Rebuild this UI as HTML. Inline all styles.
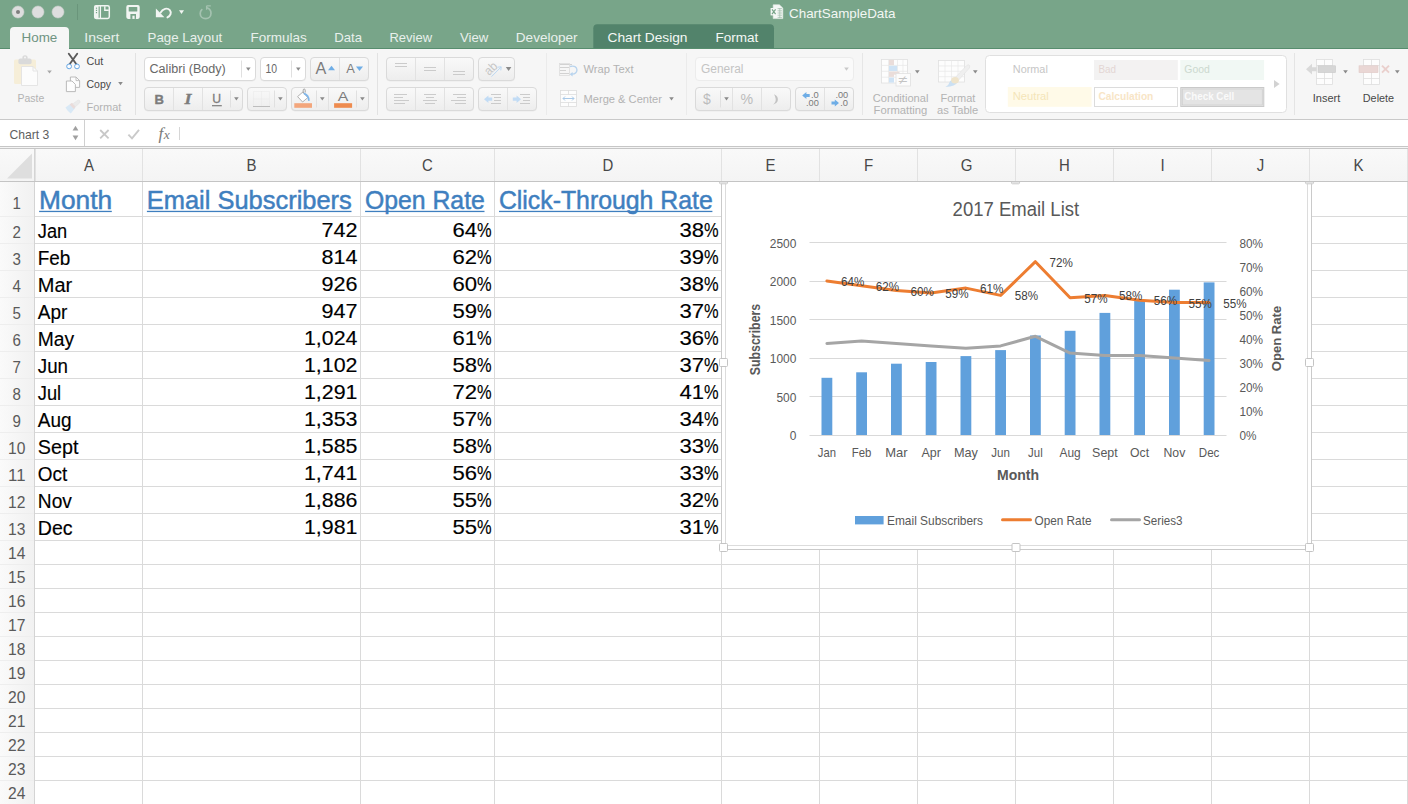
<!DOCTYPE html>
<html lang="en">
<head>
<meta charset="utf-8">
<title>ChartSampleData</title>
<style>
html,body{margin:0;padding:0;background:#ffffff;}
body{width:1408px;height:804px;overflow:hidden;position:relative;font-family:"Liberation Sans",sans-serif;}
svg{position:absolute;left:0;top:0;display:block;font-family:"Liberation Sans",sans-serif;}
</style>
</head>
<body>
<svg width="1408" height="804" viewBox="0 0 1408 804">
<rect x="0" y="0" width="1408" height="804" fill="#ffffff"/>
<g id="titlebar">
<rect x="0" y="0" width="1408" height="49" fill="#78a589"/>
<circle cx="18" cy="12" r="6" fill="#dedede" stroke="#c9cfcb" stroke-width="0.6"/>
<circle cx="38" cy="12" r="6" fill="#dedede" stroke="#c9cfcb" stroke-width="0.6"/>
<circle cx="58" cy="12" r="6" fill="#dedede" stroke="#c9cfcb" stroke-width="0.6"/>
<circle cx="18" cy="12" r="2" fill="#7e7e7e"/>
<line x1="77.5" y1="4" x2="77.5" y2="20" stroke="#6a957b" stroke-width="1" />
<rect x="94.7" y="5.8" width="14.6" height="12.6" fill="none" stroke="#f1f5f2" stroke-width="1.5" rx="1.6"/>
<rect x="94.4" y="5.6" width="4.2" height="13" fill="#f1f5f2" rx="1"/>
<rect x="95.9" y="7.6" width="1.2" height="1.2" fill="#78a589"/>
<rect x="95.9" y="9.8" width="1.2" height="1.2" fill="#78a589"/>
<rect x="95.9" y="12" width="1.2" height="1.2" fill="#78a589"/>
<line x1="100.4" y1="6" x2="100.4" y2="18.2" stroke="#f1f5f2" stroke-width="1.3" />
<path d="M104.8 6.2v4h4" fill="none" stroke="#f1f5f2" stroke-width="1.4"/>
<rect x="126.3" y="5.1" width="13.4" height="13.8" fill="#f1f5f2" rx="1.8"/>
<rect x="128.7" y="6.9" width="8.6" height="4.6" fill="#78a589" rx="0.6"/>
<rect x="130.4" y="14" width="5.6" height="4.9" fill="#78a589"/>
<rect x="132.4" y="15.7" width="2.2" height="3.2" fill="#f1f5f2"/>
<path d="M155.9 8.6V17.2H164.4Z" fill="#f1f5f2"/>
<path d="M160.6 12.6 C162.6 8.6 167.4 7.4 169.8 10.2 C171.8 12.6 170.6 15.8 167.4 17.4" fill="none" stroke="#f1f5f2" stroke-width="1.9" stroke-linecap="round"/>
<path d="M179.0 10.299999999999999h5l-2.5 3.8z" fill="#f1f5f2"/>
<path d="M207.6 8 C209.8 9 211 11 211 13.2 C211 16.4 208.6 18.6 205.6 18.6 C202.6 18.6 200.2 16.4 200.2 13.4 C200.2 11.8 200.8 10.6 201.8 9.6" fill="none" stroke="#a4c2b0" stroke-width="1.7" stroke-linecap="round"/>
<path d="M206.6 5.8h4.2M206.6 5.8v4" fill="none" stroke="#a4c2b0" stroke-width="1.3"/>
<path d="M773.2 4.8h6.2l3.4 3.2v10.6h-9.6z" fill="#f4f7f5" stroke="#e8efe9" stroke-width="0.6"/>
<rect x="770.6" y="8" width="6.4" height="7.4" fill="#f4f7f5"/>
<path d="M772 9.4l3.6 4.8M775.6 9.4l-3.6 4.8" fill="none" stroke="#78a589" stroke-width="1.2"/>
<path d="M777.6 8.6h4.4M777.6 10.8h4.4M777.6 13h4.4M777.6 15.2h4.4M777.6 17.4h4.4M779.8 8v10" fill="none" stroke="#9dbdaa" stroke-width="0.7"/>
<text x="789" y="18" font-size="13" fill="#f3f7f4" textLength="106.5" lengthAdjust="spacingAndGlyphs">ChartSampleData</text>
</g>
<g id="tabs">
<path d="M10 49V31q0-4 4-4h51q4 0 4 4v18z" fill="#f6f6f6"/>
<text x="21.5" y="42" font-size="13" fill="#6f9482" textLength="35.8" lengthAdjust="spacingAndGlyphs">Home</text>
<text x="84.3" y="42" font-size="13" fill="#e9f0ec" textLength="35" lengthAdjust="spacingAndGlyphs">Insert</text>
<text x="147.5" y="42" font-size="13" fill="#e9f0ec" textLength="74.8" lengthAdjust="spacingAndGlyphs">Page Layout</text>
<text x="250.5" y="42" font-size="13" fill="#e9f0ec" textLength="56.3" lengthAdjust="spacingAndGlyphs">Formulas</text>
<text x="334.3" y="42" font-size="13" fill="#e9f0ec" textLength="27.8" lengthAdjust="spacingAndGlyphs">Data</text>
<text x="389.5" y="42" font-size="13" fill="#e9f0ec" textLength="42.5" lengthAdjust="spacingAndGlyphs">Review</text>
<text x="460" y="42" font-size="13" fill="#e9f0ec" textLength="28.3" lengthAdjust="spacingAndGlyphs">View</text>
<text x="515.8" y="42" font-size="13" fill="#e9f0ec" textLength="61.8" lengthAdjust="spacingAndGlyphs">Developer</text>
<path d="M593.3 48.5V28.3q0-4 4-4h172.7q4 0 4 4v20.2z" fill="#52836b"/>
<text x="607.5" y="42" font-size="13" fill="#f4f8f5" textLength="80" lengthAdjust="spacingAndGlyphs">Chart Design</text>
<text x="715.5" y="42" font-size="13" fill="#f4f8f5" textLength="42.8" lengthAdjust="spacingAndGlyphs">Format</text>
<rect x="0" y="48" width="1408" height="1" fill="#578d6e"/>
<rect x="10" y="48" width="59" height="1" fill="#f6f6f6"/>
</g>
<defs><linearGradient id="bg" x1="0" y1="0" x2="0" y2="1"><stop offset="0" stop-color="#f9f9f9"/><stop offset="1" stop-color="#ededed"/></linearGradient></defs>
<g id="ribbon">
<rect x="0" y="49" width="1408" height="70" fill="#f6f6f6"/>
<rect x="0" y="119" width="1408" height="1" fill="#c9c9c9"/>
<line x1="135.5" y1="53" x2="135.5" y2="115" stroke="#e2e2e2" stroke-width="1" />
<line x1="377.5" y1="53" x2="377.5" y2="115" stroke="#e2e2e2" stroke-width="1" />
<line x1="546.5" y1="53" x2="546.5" y2="115" stroke="#ebebeb" stroke-width="1" />
<line x1="686.5" y1="53" x2="686.5" y2="115" stroke="#ebebeb" stroke-width="1" />
<line x1="862.5" y1="53" x2="862.5" y2="115" stroke="#e6e6e6" stroke-width="1" />
<line x1="1294.5" y1="53" x2="1294.5" y2="115" stroke="#e4e4e4" stroke-width="1" />
<rect x="14" y="59.5" width="22" height="24.5" fill="#f6eed8" rx="1.6"/>
<rect x="18.4" y="58.6" width="13.2" height="5.6" fill="#dadada" rx="2"/>
<circle cx="25" cy="58" r="2.7" fill="#dadada"/>
<circle cx="25" cy="57.6" r="1" fill="#f6f6f6"/>
<path d="M21.5 66.5h11.5l4.5 4.5v14.5h-16z" fill="#fcfcfc" stroke="#e2e2e2" stroke-width="0.9"/>
<path d="M33 66.5v4.5h4.5" fill="none" stroke="#e2e2e2" stroke-width="0.9"/>
<path d="M47.2 70.4h4.6l-2.3 3.2z" fill="#a8a8a8"/>
<text x="17.5" y="102" font-size="11.2" fill="#b3b3b3" textLength="26.8" lengthAdjust="spacingAndGlyphs">Paste</text>
<path d="M68.8 53.8 L76.4 64.2 M77.2 53.8 L69.6 64.2" fill="none" stroke="#5a5a5a" stroke-width="1.9" stroke-linecap="round"/>
<circle cx="69.1" cy="66.4" r="2.4" fill="#fafcff" stroke="#64a6e4" stroke-width="1"/>
<circle cx="77" cy="66.4" r="2.4" fill="#fafcff" stroke="#64a6e4" stroke-width="1"/>
<text x="86.5" y="65.2" font-size="11.2" fill="#484848" textLength="16.8" lengthAdjust="spacingAndGlyphs">Cut</text>
<path d="M70.4 77h5.6l3.6 3.6v6.8h-9.2z" fill="#fdfdfd" stroke="#b4b4b4" stroke-width="0.9"/>
<path d="M76 77v3.6h3.6" fill="none" stroke="#b4b4b4" stroke-width="0.8"/>
<path d="M66.4 81h5.6l3.4 3.4v7.2h-9z" fill="#fdfdfd" stroke="#b4b4b4" stroke-width="0.9"/>
<text x="86.5" y="88.2" font-size="11.2" fill="#484848" textLength="24.5" lengthAdjust="spacingAndGlyphs">Copy</text>
<path d="M118.2 82.0h4.6l-2.3 3.2z" fill="#8a8a8a"/>
<path d="M65.4 107.6l6-4.4 4 4.6-4.6 5.6q-3-1.6-5.4-5.8z" fill="#d9e9f6"/>
<path d="M69.6 104.4l2.4-1.6 3.6 4-1.8 2.2z" fill="#eadcda"/>
<path d="M73.2 103.6l4.6-3.4q1.6-.6 2.2 .8q.4 1.2-.6 2.2l-4 3.6z" fill="#ebebeb" stroke="#e0e0e0" stroke-width="0.5"/>
<text x="86.5" y="111.2" font-size="11.2" fill="#b3b3b3" textLength="34.8" lengthAdjust="spacingAndGlyphs">Format</text>
<rect x="144.5" y="58.1" width="111.0" height="23.0" fill="none" stroke="#ececec" stroke-width="1" rx="3.5"/>
<rect x="144.5" y="57.5" width="111.0" height="23.0" fill="#ffffff" stroke="#dadada" stroke-width="1" rx="3.5"/>
<line x1="241.5" y1="60.5" x2="241.5" y2="77.5" stroke="#e0e0e0" stroke-width="1" />
<text x="149.5" y="73.2" font-size="12.3" fill="#686868" textLength="76.3" lengthAdjust="spacingAndGlyphs">Calibri (Body)</text>
<path d="M246.0 67.60000000000001h4.6l-2.3 3.2z" fill="#8a8a8a"/>
<rect x="260.5" y="58.1" width="45.0" height="23.0" fill="none" stroke="#ececec" stroke-width="1" rx="3.5"/>
<rect x="260.5" y="57.5" width="45.0" height="23.0" fill="#ffffff" stroke="#dadada" stroke-width="1" rx="3.5"/>
<line x1="291.5" y1="60.5" x2="291.5" y2="77.5" stroke="#e0e0e0" stroke-width="1" />
<text x="265.5" y="73.2" font-size="12.3" fill="#686868" textLength="11.6" lengthAdjust="spacingAndGlyphs">10</text>
<path d="M296.0 67.60000000000001h4.6l-2.3 3.2z" fill="#8a8a8a"/>
<rect x="310.5" y="58.1" width="58.0" height="23.0" fill="none" stroke="#ececec" stroke-width="1" rx="3.5"/>
<rect x="310.5" y="57.5" width="58.0" height="23.0" fill="url(#bg)" stroke="#dadada" stroke-width="1" rx="3.5"/>
<line x1="339.5" y1="58.0" x2="339.5" y2="80.0" stroke="#e2e2e2" stroke-width="1" />
<text x="315.6" y="74" font-size="15.6" fill="#7c7c7c" textLength="10.8" lengthAdjust="spacingAndGlyphs">A</text>
<path d="M328 70.2h7l-3.5 -4.4z" fill="#6eade6"/>
<text x="346.2" y="73" font-size="12.4" fill="#7c7c7c" textLength="8.6" lengthAdjust="spacingAndGlyphs">A</text>
<path d="M356 66.6h7l-3.5 4.4z" fill="#6eade6"/>
<rect x="144.5" y="88.1" width="98.0" height="23.0" fill="none" stroke="#ececec" stroke-width="1" rx="3.5"/>
<rect x="144.5" y="87.5" width="98.0" height="23.0" fill="url(#bg)" stroke="#dadada" stroke-width="1" rx="3.5"/>
<line x1="173.5" y1="88.0" x2="173.5" y2="110.0" stroke="#e2e2e2" stroke-width="1" />
<line x1="202.5" y1="88.0" x2="202.5" y2="110.0" stroke="#e2e2e2" stroke-width="1" />
<line x1="230.5" y1="90.5" x2="230.5" y2="107.5" stroke="#e0e0e0" stroke-width="1" />
<text x="154.4" y="104.2" font-size="13.5" fill="#7c7c7c" font-weight="bold" textLength="9.4" lengthAdjust="spacingAndGlyphs" stroke="#7c7c7c" stroke-width="0.4">B</text>
<text x="184.4" y="104.2" font-size="14" fill="#7c7c7c" font-weight="bold" font-style="italic" textLength="7" lengthAdjust="spacingAndGlyphs" font-family="Liberation Serif, serif" stroke="#7c7c7c" stroke-width="0.3">I</text>
<text x="212.3" y="103.4" font-size="12.5" fill="#7c7c7c" textLength="8.8" lengthAdjust="spacingAndGlyphs" stroke="#7c7c7c" stroke-width="0.3">U</text>
<line x1="212" y1="105.7" x2="221.8" y2="105.7" stroke="#7c7c7c" stroke-width="1.2" />
<path d="M234.1 97.2h4.6l-2.3 3.2z" fill="#8a8a8a"/>
<rect x="247.5" y="88.1" width="39.0" height="23.0" fill="none" stroke="#ececec" stroke-width="1" rx="3.5"/>
<rect x="247.5" y="87.5" width="39.0" height="23.0" fill="url(#bg)" stroke="#dadada" stroke-width="1" rx="3.5"/>
<line x1="274.5" y1="90.5" x2="274.5" y2="107.5" stroke="#e0e0e0" stroke-width="1" />
<rect x="253.5" y="91.5" width="16" height="15" fill="none" stroke="#e6e6e6" stroke-width="0.8" stroke-dasharray="1 1"/>
<path d="M261.5 91.5v15M253.5 99h16" fill="none" stroke="#e6e6e6" stroke-width="0.8" stroke-dasharray="1 1"/>
<line x1="253" y1="106.5" x2="270" y2="106.5" stroke="#bdbdbd" stroke-width="1" />
<path d="M278.09999999999997 97.2h4.6l-2.3 3.2z" fill="#8a8a8a"/>
<rect x="291.5" y="88.1" width="77.0" height="23.0" fill="none" stroke="#ececec" stroke-width="1" rx="3.5"/>
<rect x="291.5" y="87.5" width="77.0" height="23.0" fill="url(#bg)" stroke="#dadada" stroke-width="1" rx="3.5"/>
<line x1="328.5" y1="88.0" x2="328.5" y2="110.0" stroke="#e2e2e2" stroke-width="1" />
<line x1="316.5" y1="90.5" x2="316.5" y2="107.5" stroke="#e0e0e0" stroke-width="1" />
<line x1="356.5" y1="90.5" x2="356.5" y2="107.5" stroke="#e0e0e0" stroke-width="1" />
<path d="M297.6 96.6l5.2-4.6 5 5.6-5.2 4.4z" fill="#ffffff" stroke="#a8a8a8" stroke-width="0.9" stroke-linejoin="round"/>
<path d="M303.2 93.2v-3q0-1.2 1-1.2q1 0 1 1.2v2.4" fill="none" stroke="#9a9a9a" stroke-width="0.9"/>
<path d="M304.4 93.6q4.2 1.6 4.4 6.6" fill="none" stroke="#7fb6ea" stroke-width="1.7" stroke-linecap="round"/>
<rect x="294.3" y="103.2" width="17.7" height="4.6" fill="#f3a67c"/>
<path d="M320.0 97.2h4.6l-2.3 3.2z" fill="#8a8a8a"/>
<text x="337.8" y="101" font-size="13.6" fill="#7c7c7c" textLength="10.6" lengthAdjust="spacingAndGlyphs">A</text>
<rect x="334.1" y="103.2" width="18" height="4.6" fill="#ee8b4e"/>
<path d="M360.09999999999997 97.2h4.6l-2.3 3.2z" fill="#8a8a8a"/>
<rect x="386.5" y="58.1" width="87.0" height="23.0" fill="none" stroke="#ececec" stroke-width="1" rx="3.5"/>
<rect x="386.5" y="57.5" width="87.0" height="23.0" fill="url(#bg)" stroke="#dadada" stroke-width="1" rx="3.5"/>
<line x1="415.5" y1="58.0" x2="415.5" y2="80.0" stroke="#e2e2e2" stroke-width="1" />
<line x1="444.5" y1="58.0" x2="444.5" y2="80.0" stroke="#e2e2e2" stroke-width="1" />
<path d="M395 63.5h12M395 66.5h12" fill="none" stroke="#cbcbcb" stroke-width="1"/>
<path d="M424 67.5h12M424 70.5h12" fill="none" stroke="#cbcbcb" stroke-width="1"/>
<path d="M453 71.5h12M453 74.5h12" fill="none" stroke="#cbcbcb" stroke-width="1"/>
<rect x="478.5" y="58.1" width="36.0" height="23.0" fill="none" stroke="#ececec" stroke-width="1" rx="3.5"/>
<rect x="478.5" y="57.5" width="36.0" height="23.0" fill="url(#bg)" stroke="#dadada" stroke-width="1" rx="3.5"/>
<text x="484.5" y="73" font-size="12.5" fill="#c6c6c6" textLength="13" lengthAdjust="spacingAndGlyphs" transform="rotate(-45 490.5 69)">ab</text>
<path d="M491.5 76.6l9.4-9.4M501.2 66.8l-3.6.4M501.2 66.8l-.4 3.6" fill="none" stroke="#bcd8f2" stroke-width="1"/>
<path d="M505.8 67.0h5.6l-2.8 4z" fill="#8a8a8a"/>
<rect x="386.5" y="88.1" width="87.0" height="23.0" fill="none" stroke="#ececec" stroke-width="1" rx="3.5"/>
<rect x="386.5" y="87.5" width="87.0" height="23.0" fill="url(#bg)" stroke="#dadada" stroke-width="1" rx="3.5"/>
<line x1="415.5" y1="88.0" x2="415.5" y2="110.0" stroke="#e2e2e2" stroke-width="1" />
<line x1="444.5" y1="88.0" x2="444.5" y2="110.0" stroke="#e2e2e2" stroke-width="1" />
<path d="M394 94.5h13M394 97.5h9M394 100.5h15M394 103.5h11" fill="none" stroke="#cbcbcb" stroke-width="1"/>
<path d="M424 94.5h12M426 97.5h8M423 100.5h14M425 103.5h10" fill="none" stroke="#cbcbcb" stroke-width="1"/>
<path d="M453 94.5h13M457 97.5h9M451 100.5h15M455 103.5h11" fill="none" stroke="#cbcbcb" stroke-width="1"/>
<rect x="478.5" y="88.1" width="58.0" height="23.0" fill="none" stroke="#ececec" stroke-width="1" rx="3.5"/>
<rect x="478.5" y="87.5" width="58.0" height="23.0" fill="url(#bg)" stroke="#dadada" stroke-width="1" rx="3.5"/>
<line x1="507.5" y1="88.0" x2="507.5" y2="110.0" stroke="#e2e2e2" stroke-width="1" />
<path d="M491 94.5h10M494 97.5h7M494 100.5h7M491 103.5h10" fill="none" stroke="#cbcbcb" stroke-width="1"/>
<path d="M484 99.2l4.4-3.8v2.2h3.8v3.2h-3.8v2.2z" fill="#c2dcf5"/>
<path d="M520 94.5h10M523 97.5h7M523 100.5h7M520 103.5h10" fill="none" stroke="#cbcbcb" stroke-width="1"/>
<path d="M521 99.2l-4.4-3.8v2.2h-3.8v3.2h3.8v2.2z" fill="#c2dcf5"/>
<path d="M560 64.5h12M560 67.5h9M560 70.5h6M560 73.5h9" fill="none" stroke="#d2d2d2" stroke-width="1"/>
<path d="M570 66.5q6.5-1.5 7 3.5q-.5 4.5-6 4" fill="none" stroke="#b9d4ee" stroke-width="1.4"/>
<path d="M572.6 72l-3 2.2 3 2.2z" fill="#b9d4ee"/>
<rect x="559.5" y="63.5" width="10" height="12" fill="none" stroke="#dcdcdc" stroke-width="0.8"/>
<text x="583.5" y="73.2" font-size="11.2" fill="#b3b3b3" textLength="50" lengthAdjust="spacingAndGlyphs">Wrap Text</text>
<rect x="560.5" y="90.5" width="16" height="16" fill="#fdfdfd" stroke="#dcdcdc" stroke-width="0.8"/>
<path d="M560.5 94.5h16M560.5 102.5h16M568.5 90.5v4M568.5 102.5v4" fill="none" stroke="#dcdcdc" stroke-width="0.8"/>
<path d="M563 98.5h11M565 96.5l-2 2 2 2M572 96.5l2 2-2 2" fill="none" stroke="#a9c9e8" stroke-width="1"/>
<text x="583.5" y="103.2" font-size="11.2" fill="#b3b3b3" textLength="78.5" lengthAdjust="spacingAndGlyphs">Merge &amp; Center</text>
<path d="M669.2 97.2h4.6l-2.3 3.2z" fill="#8a8a8a"/>
<rect x="695.5" y="57.5" width="158" height="23" fill="#fafafa" stroke="#ececec" stroke-width="1" rx="3.5"/>
<text x="701" y="73.2" font-size="12.5" fill="#c4c4c4" textLength="42.5" lengthAdjust="spacingAndGlyphs">General</text>
<path d="M844.2 67.60000000000001h4.6l-2.3 3.2z" fill="#c9c9c9"/>
<rect x="695.5" y="88.1" width="95.0" height="23.0" fill="none" stroke="#ececec" stroke-width="1" rx="3.5"/>
<rect x="695.5" y="87.5" width="95.0" height="23.0" fill="url(#bg)" stroke="#dadada" stroke-width="1" rx="3.5"/>
<line x1="732.5" y1="88.0" x2="732.5" y2="110.0" stroke="#e2e2e2" stroke-width="1" />
<line x1="761.5" y1="88.0" x2="761.5" y2="110.0" stroke="#e2e2e2" stroke-width="1" />
<line x1="720.5" y1="90.5" x2="720.5" y2="107.5" stroke="#e0e0e0" stroke-width="1" />
<text x="703" y="104" font-size="14" fill="#bcbcbc" textLength="7.8" lengthAdjust="spacingAndGlyphs">$</text>
<path d="M724.2 97.2h4.6l-2.3 3.2z" fill="#8a8a8a"/>
<text x="740.6" y="104" font-size="14" fill="#bcbcbc" textLength="12.6" lengthAdjust="spacingAndGlyphs">%</text>
<path d="M774 94.2q5 2.2 3.6 7q-1 2.6-4.6 3.6q3.4-3 2.6-6.4q-.4-2.4-1.6-4.2z" fill="#c2c2c2"/>
<rect x="795.5" y="88.1" width="58.0" height="23.0" fill="none" stroke="#ececec" stroke-width="1" rx="3.5"/>
<rect x="795.5" y="87.5" width="58.0" height="23.0" fill="url(#bg)" stroke="#dadada" stroke-width="1" rx="3.5"/>
<line x1="824.5" y1="88.0" x2="824.5" y2="110.0" stroke="#e2e2e2" stroke-width="1" />
<text x="811" y="97.8" font-size="9.4" fill="#7a7a7a" textLength="7.8" lengthAdjust="spacingAndGlyphs">.0</text>
<text x="806" y="106" font-size="9.4" fill="#7a7a7a" textLength="12.8" lengthAdjust="spacingAndGlyphs">.00</text>
<path d="M802.2 95.5l4.2-3.5v2.1h3.3v2.8h-3.3v2.1z" fill="#6eade6"/>
<text x="835.4" y="97.8" font-size="9.4" fill="#7a7a7a" textLength="12.8" lengthAdjust="spacingAndGlyphs">.00</text>
<text x="840.2" y="106" font-size="9.4" fill="#7a7a7a" textLength="7.8" lengthAdjust="spacingAndGlyphs">.0</text>
<path d="M839 103l-4.2-3.5v2.1h-3.3v2.8h3.3v2.1z" fill="#6eade6"/>
<rect x="881.5" y="59.5" width="26" height="23.5" fill="#fdfdfd" stroke="#e0e0e0" stroke-width="0.8"/>
<path d="M888.5 59.5v23.5M897.5 59.5v23.5M903 59.5v23.5M881.5 65.4h26M881.5 71.3h26M881.5 77.2h26" fill="none" stroke="#e6e6e6" stroke-width="0.7"/>
<rect x="889" y="59.9" width="5" height="5.2" fill="#eaddda"/>
<rect x="889" y="65.8" width="8.2" height="5.2" fill="#cfe3f5"/>
<rect x="889" y="71.7" width="5" height="5.2" fill="#eaddda"/>
<rect x="893.5" y="71.7" width="6" height="3" fill="#eaddda"/>
<rect x="889" y="77.6" width="5" height="5" fill="#cfe3f5"/>
<rect x="896" y="73.5" width="14.5" height="12.5" fill="#fcfcfc" stroke="#e0e0e0" stroke-width="0.8"/>
<text x="898.6" y="84" font-size="12" fill="#c4c4c4" textLength="9" lengthAdjust="spacingAndGlyphs">≠</text>
<path d="M915.0 70.2h4.6l-2.3 3.2z" fill="#8a8a8a"/>
<text x="872.8" y="102.2" font-size="11.2" fill="#b3b3b3" textLength="55.6" lengthAdjust="spacingAndGlyphs">Conditional</text>
<text x="873.5" y="114" font-size="11.2" fill="#b3b3b3" textLength="53.8" lengthAdjust="spacingAndGlyphs">Formatting</text>
<rect x="938.5" y="60.5" width="26" height="21.5" fill="#fdfdfd" stroke="#e0e0e0" stroke-width="0.8"/>
<path d="M945 60.5v21.5M951.5 60.5v21.5M958 60.5v21.5M938.5 65.9h26M938.5 71.3h26M938.5 76.7h26" fill="none" stroke="#e8e8e8" stroke-width="0.7"/>
<path d="M955.2 77.6l11.6-12.2q1.8-1.4 2.8 .2q.6 1.4-.6 2.8l-11 12.4z" fill="#efefef" stroke="#e0e0e0" stroke-width="0.6"/>
<path d="M958 81.4q-2.4 5-12.6 5.6q3.6-2 4.8-6q2.8-3.4 7.8.4z" fill="#cbe0f3"/>
<ellipse cx="955" cy="80.2" rx="3.8" ry="3.2" fill="#efe4cb"/>
<path d="M973.0 70.2h4.6l-2.3 3.2z" fill="#8a8a8a"/>
<text x="940.5" y="102.2" font-size="11.2" fill="#b3b3b3" textLength="34.8" lengthAdjust="spacingAndGlyphs">Format</text>
<text x="937" y="114" font-size="11.2" fill="#b3b3b3" textLength="41.3" lengthAdjust="spacingAndGlyphs">as Table</text>
<rect x="985.5" y="55.5" width="301" height="57" fill="#ffffff" stroke="#e0e0e0" stroke-width="1" rx="4"/>
<text x="1012.8" y="73.2" font-size="11.5" fill="#c6c6c6" textLength="35" lengthAdjust="spacingAndGlyphs">Normal</text>
<rect x="1094" y="60" width="83.8" height="20" fill="#f3f2f2"/>
<text x="1098.5" y="73.2" font-size="11.5" fill="#e3d6d4" textLength="17.5" lengthAdjust="spacingAndGlyphs">Bad</text>
<rect x="1180.3" y="60" width="83.8" height="20" fill="#f1f8f4"/>
<text x="1184.3" y="73.2" font-size="11.5" fill="#ccd8cf" textLength="25.5" lengthAdjust="spacingAndGlyphs">Good</text>
<rect x="1007.8" y="87" width="83.8" height="19.8" fill="#fffae8"/>
<text x="1012.8" y="100.4" font-size="11.5" fill="#f4e5b8" textLength="36" lengthAdjust="spacingAndGlyphs">Neutral</text>
<rect x="1094.5" y="87.5" width="83" height="19" fill="#ffffff" stroke="#dcdcdc" stroke-width="1"/>
<text x="1098.5" y="100.4" font-size="11.5" fill="#f8e5c6" font-weight="bold" textLength="54.8" lengthAdjust="spacingAndGlyphs">Calculation</text>
<rect x="1180.8" y="87.5" width="83" height="19" fill="#e4e4e4" stroke="#c9c9c9" stroke-width="1"/>
<rect x="1182.3" y="89" width="80" height="16" fill="none" stroke="#cfcfcf" stroke-width="0.8"/>
<text x="1184.3" y="100.4" font-size="11.5" fill="#fafafa" font-weight="bold" textLength="50" lengthAdjust="spacingAndGlyphs">Check Cell</text>
<path d="M1274 80l5.6 4-5.6 4z" fill="#d2d2d2"/>
<rect x="1316.5" y="59.5" width="16" height="25" fill="#fdfdfd" stroke="#dedede" stroke-width="0.8"/>
<path d="M1324.5 59.5v25M1316.5 65.5h16M1316.5 78.5h16" fill="none" stroke="#dedede" stroke-width="0.8"/>
<rect x="1318" y="65.8" width="17.6" height="6.8" fill="#d6d6d6" stroke="#c9c9c9" stroke-width="0.6"/>
<path d="M1306 69.2l6-5.4v3.4h4.6v4h-4.6v3.4z" fill="#d9d9d9"/>
<path d="M1343.2 70.2h4.6l-2.3 3.2z" fill="#8a8a8a"/>
<text x="1312.8" y="102.2" font-size="11.2" fill="#484848" textLength="27.5" lengthAdjust="spacingAndGlyphs">Insert</text>
<rect x="1363.5" y="59.5" width="16" height="25" fill="#fdfdfd" stroke="#dedede" stroke-width="0.8"/>
<path d="M1371.5 59.5v25M1363.5 65.5h16M1363.5 78.5h16" fill="none" stroke="#dedede" stroke-width="0.8"/>
<rect x="1359" y="65.8" width="19" height="6.8" fill="#ead7d5" stroke="#e0c9c7" stroke-width="0.6"/>
<path d="M1382 65.6l7 7M1389 65.6l-7 7" fill="none" stroke="#ead0cd" stroke-width="2"/>
<path d="M1395.0 70.2h4.6l-2.3 3.2z" fill="#8a8a8a"/>
<text x="1362.8" y="102.2" font-size="11.2" fill="#484848" textLength="31.3" lengthAdjust="spacingAndGlyphs">Delete</text>
</g>
<g id="formulabar">
<rect x="0" y="120" width="1408" height="26" fill="#ffffff"/>
<text x="9.5" y="138.8" font-size="13.2" fill="#5e5e5e" textLength="39.8" lengthAdjust="spacingAndGlyphs">Chart 3</text>
<path d="M72.6 130.4h5.8l-2.9-4.6z" fill="#a0a0a0"/>
<path d="M72.6 135.6h5.8l-2.9 4.6z" fill="#a0a0a0"/>
<line x1="84.5" y1="120" x2="84.5" y2="146" stroke="#d0d0d0" stroke-width="1" />
<path d="M100.2 130l8.4 8.4M108.6 130l-8.4 8.4" fill="none" stroke="#c8c8c8" stroke-width="1.8"/>
<path d="M128.4 134.6l3.6 3.8 7-8.6" fill="none" stroke="#cacaca" stroke-width="1.9"/>
<text x="158.4" y="139.4" font-size="17" fill="#7a7a7a" font-style="italic" font-family="Liberation Serif, serif">f<tspan font-size="13.5" dx="0.6">x</tspan></text>
<line x1="179.5" y1="127" x2="179.5" y2="140" stroke="#d6d6d6" stroke-width="1" />
<rect x="0" y="146" width="1408" height="1" fill="#c6c6c6"/>
<rect x="0" y="147" width="1408" height="1" fill="#f4f4f4"/>
<rect x="0" y="148" width="1408" height="1" fill="#c6c6c6"/>
</g>
<g id="sheet">
<defs><linearGradient id="hg" x1="0" y1="0" x2="0" y2="1"><stop offset="0" stop-color="#f9f9f9"/><stop offset="1" stop-color="#f4f4f4"/></linearGradient><linearGradient id="rg" x1="0" y1="0" x2="1" y2="0"><stop offset="0" stop-color="#fafafa"/><stop offset="1" stop-color="#f1f1f1"/></linearGradient></defs>
<rect x="0" y="149" width="1408" height="32" fill="url(#hg)"/>
<rect x="0" y="181" width="35" height="623" fill="url(#rg)"/>
<rect x="142" y="181" width="1" height="623" fill="#dadada"/>
<rect x="360" y="181" width="1" height="623" fill="#dadada"/>
<rect x="494" y="181" width="1" height="623" fill="#dadada"/>
<rect x="721" y="181" width="1" height="623" fill="#dadada"/>
<rect x="819" y="181" width="1" height="623" fill="#dadada"/>
<rect x="917" y="181" width="1" height="623" fill="#dadada"/>
<rect x="1015" y="181" width="1" height="623" fill="#dadada"/>
<rect x="1113" y="181" width="1" height="623" fill="#dadada"/>
<rect x="1211" y="181" width="1" height="623" fill="#dadada"/>
<rect x="1309" y="181" width="1" height="623" fill="#dadada"/>
<rect x="1407" y="181" width="1" height="623" fill="#dadada"/>
<rect x="35" y="216" width="1373" height="1" fill="#dadada"/>
<rect x="35" y="243" width="1373" height="1" fill="#dadada"/>
<rect x="35" y="270" width="1373" height="1" fill="#dadada"/>
<rect x="35" y="297" width="1373" height="1" fill="#dadada"/>
<rect x="35" y="324" width="1373" height="1" fill="#dadada"/>
<rect x="35" y="351" width="1373" height="1" fill="#dadada"/>
<rect x="35" y="378" width="1373" height="1" fill="#dadada"/>
<rect x="35" y="405" width="1373" height="1" fill="#dadada"/>
<rect x="35" y="432" width="1373" height="1" fill="#dadada"/>
<rect x="35" y="459" width="1373" height="1" fill="#dadada"/>
<rect x="35" y="486" width="1373" height="1" fill="#dadada"/>
<rect x="35" y="513" width="1373" height="1" fill="#dadada"/>
<rect x="35" y="540" width="1373" height="1" fill="#dadada"/>
<rect x="35" y="564" width="1373" height="1" fill="#dadada"/>
<rect x="35" y="588" width="1373" height="1" fill="#dadada"/>
<rect x="35" y="612" width="1373" height="1" fill="#dadada"/>
<rect x="35" y="636" width="1373" height="1" fill="#dadada"/>
<rect x="35" y="660" width="1373" height="1" fill="#dadada"/>
<rect x="35" y="684" width="1373" height="1" fill="#dadada"/>
<rect x="35" y="708" width="1373" height="1" fill="#dadada"/>
<rect x="35" y="732" width="1373" height="1" fill="#dadada"/>
<rect x="35" y="756" width="1373" height="1" fill="#dadada"/>
<rect x="35" y="780" width="1373" height="1" fill="#dadada"/>
<rect x="35" y="804" width="1373" height="1" fill="#dadada"/>
<rect x="35" y="828" width="1373" height="1" fill="#dadada"/>
<rect x="35" y="149" width="1" height="32" fill="#e2e2e2"/>
<rect x="142" y="149" width="1" height="32" fill="#e2e2e2"/>
<rect x="360" y="149" width="1" height="32" fill="#e2e2e2"/>
<rect x="494" y="149" width="1" height="32" fill="#e2e2e2"/>
<rect x="721" y="149" width="1" height="32" fill="#e2e2e2"/>
<rect x="819" y="149" width="1" height="32" fill="#e2e2e2"/>
<rect x="917" y="149" width="1" height="32" fill="#e2e2e2"/>
<rect x="1015" y="149" width="1" height="32" fill="#e2e2e2"/>
<rect x="1113" y="149" width="1" height="32" fill="#e2e2e2"/>
<rect x="1211" y="149" width="1" height="32" fill="#e2e2e2"/>
<rect x="1309" y="149" width="1" height="32" fill="#e2e2e2"/>
<rect x="1407" y="149" width="1" height="32" fill="#e2e2e2"/>
<rect x="0" y="216" width="34" height="1" fill="#eeeeee"/>
<rect x="0" y="243" width="34" height="1" fill="#eeeeee"/>
<rect x="0" y="270" width="34" height="1" fill="#eeeeee"/>
<rect x="0" y="297" width="34" height="1" fill="#eeeeee"/>
<rect x="0" y="324" width="34" height="1" fill="#eeeeee"/>
<rect x="0" y="351" width="34" height="1" fill="#eeeeee"/>
<rect x="0" y="378" width="34" height="1" fill="#eeeeee"/>
<rect x="0" y="405" width="34" height="1" fill="#eeeeee"/>
<rect x="0" y="432" width="34" height="1" fill="#eeeeee"/>
<rect x="0" y="459" width="34" height="1" fill="#eeeeee"/>
<rect x="0" y="486" width="34" height="1" fill="#eeeeee"/>
<rect x="0" y="513" width="34" height="1" fill="#eeeeee"/>
<rect x="0" y="540" width="34" height="1" fill="#eeeeee"/>
<rect x="0" y="564" width="34" height="1" fill="#eeeeee"/>
<rect x="0" y="588" width="34" height="1" fill="#eeeeee"/>
<rect x="0" y="612" width="34" height="1" fill="#eeeeee"/>
<rect x="0" y="636" width="34" height="1" fill="#eeeeee"/>
<rect x="0" y="660" width="34" height="1" fill="#eeeeee"/>
<rect x="0" y="684" width="34" height="1" fill="#eeeeee"/>
<rect x="0" y="708" width="34" height="1" fill="#eeeeee"/>
<rect x="0" y="732" width="34" height="1" fill="#eeeeee"/>
<rect x="0" y="756" width="34" height="1" fill="#eeeeee"/>
<rect x="0" y="780" width="34" height="1" fill="#eeeeee"/>
<rect x="0" y="804" width="34" height="1" fill="#eeeeee"/>
<rect x="0" y="828" width="34" height="1" fill="#eeeeee"/>
<rect x="34" y="149" width="1" height="655" fill="#d4d4d4"/>
<rect x="0" y="181" width="1408" height="1" fill="#c4c4c4"/>
<path d="M32 153.5V178.5H7z" fill="#dedede"/>
<text x="89.0" y="171.4" font-size="17.2" fill="#484848" text-anchor="middle" textLength="10.0" lengthAdjust="spacingAndGlyphs">A</text>
<text x="251.5" y="171.4" font-size="17.2" fill="#484848" text-anchor="middle" textLength="10.0" lengthAdjust="spacingAndGlyphs">B</text>
<text x="427.5" y="171.4" font-size="17.2" fill="#484848" text-anchor="middle" textLength="10.8" lengthAdjust="spacingAndGlyphs">C</text>
<text x="608.0" y="171.4" font-size="17.2" fill="#484848" text-anchor="middle" textLength="10.8" lengthAdjust="spacingAndGlyphs">D</text>
<text x="770.5" y="171.4" font-size="17.2" fill="#484848" text-anchor="middle" textLength="10.0" lengthAdjust="spacingAndGlyphs">E</text>
<text x="868.5" y="171.4" font-size="17.2" fill="#484848" text-anchor="middle" textLength="9.2" lengthAdjust="spacingAndGlyphs">F</text>
<text x="966.5" y="171.4" font-size="17.2" fill="#484848" text-anchor="middle" textLength="11.7" lengthAdjust="spacingAndGlyphs">G</text>
<text x="1064.5" y="171.4" font-size="17.2" fill="#484848" text-anchor="middle" textLength="10.8" lengthAdjust="spacingAndGlyphs">H</text>
<text x="1162.5" y="171.4" font-size="17.2" fill="#484848" text-anchor="middle" textLength="4.2" lengthAdjust="spacingAndGlyphs">I</text>
<text x="1260.5" y="171.4" font-size="17.2" fill="#484848" text-anchor="middle" textLength="7.5" lengthAdjust="spacingAndGlyphs">J</text>
<text x="1358.5" y="171.4" font-size="17.2" fill="#484848" text-anchor="middle" textLength="10.0" lengthAdjust="spacingAndGlyphs">K</text>
<text x="16.8" y="208.6" font-size="16.6" fill="#5a5a5a" text-anchor="middle" textLength="8.4" lengthAdjust="spacingAndGlyphs">1</text>
<text x="16.8" y="237.8" font-size="16.6" fill="#5a5a5a" text-anchor="middle" textLength="8.4" lengthAdjust="spacingAndGlyphs">2</text>
<text x="16.8" y="264.8" font-size="16.6" fill="#5a5a5a" text-anchor="middle" textLength="8.4" lengthAdjust="spacingAndGlyphs">3</text>
<text x="16.8" y="291.8" font-size="16.6" fill="#5a5a5a" text-anchor="middle" textLength="8.4" lengthAdjust="spacingAndGlyphs">4</text>
<text x="16.8" y="318.8" font-size="16.6" fill="#5a5a5a" text-anchor="middle" textLength="8.4" lengthAdjust="spacingAndGlyphs">5</text>
<text x="16.8" y="345.8" font-size="16.6" fill="#5a5a5a" text-anchor="middle" textLength="8.4" lengthAdjust="spacingAndGlyphs">6</text>
<text x="16.8" y="372.8" font-size="16.6" fill="#5a5a5a" text-anchor="middle" textLength="8.4" lengthAdjust="spacingAndGlyphs">7</text>
<text x="16.8" y="399.8" font-size="16.6" fill="#5a5a5a" text-anchor="middle" textLength="8.4" lengthAdjust="spacingAndGlyphs">8</text>
<text x="16.8" y="426.8" font-size="16.6" fill="#5a5a5a" text-anchor="middle" textLength="8.4" lengthAdjust="spacingAndGlyphs">9</text>
<text x="16.8" y="453.8" font-size="16.6" fill="#5a5a5a" text-anchor="middle" textLength="17.4" lengthAdjust="spacingAndGlyphs">10</text>
<text x="16.8" y="480.8" font-size="16.6" fill="#5a5a5a" text-anchor="middle" textLength="17.4" lengthAdjust="spacingAndGlyphs">11</text>
<text x="16.8" y="507.8" font-size="16.6" fill="#5a5a5a" text-anchor="middle" textLength="17.4" lengthAdjust="spacingAndGlyphs">12</text>
<text x="16.8" y="534.8" font-size="16.6" fill="#5a5a5a" text-anchor="middle" textLength="17.4" lengthAdjust="spacingAndGlyphs">13</text>
<text x="16.8" y="559" font-size="16.6" fill="#5a5a5a" text-anchor="middle" textLength="17.4" lengthAdjust="spacingAndGlyphs">14</text>
<text x="16.8" y="583" font-size="16.6" fill="#5a5a5a" text-anchor="middle" textLength="17.4" lengthAdjust="spacingAndGlyphs">15</text>
<text x="16.8" y="607" font-size="16.6" fill="#5a5a5a" text-anchor="middle" textLength="17.4" lengthAdjust="spacingAndGlyphs">16</text>
<text x="16.8" y="631" font-size="16.6" fill="#5a5a5a" text-anchor="middle" textLength="17.4" lengthAdjust="spacingAndGlyphs">17</text>
<text x="16.8" y="655" font-size="16.6" fill="#5a5a5a" text-anchor="middle" textLength="17.4" lengthAdjust="spacingAndGlyphs">18</text>
<text x="16.8" y="679" font-size="16.6" fill="#5a5a5a" text-anchor="middle" textLength="17.4" lengthAdjust="spacingAndGlyphs">19</text>
<text x="16.8" y="703" font-size="16.6" fill="#5a5a5a" text-anchor="middle" textLength="17.4" lengthAdjust="spacingAndGlyphs">20</text>
<text x="16.8" y="727" font-size="16.6" fill="#5a5a5a" text-anchor="middle" textLength="17.4" lengthAdjust="spacingAndGlyphs">21</text>
<text x="16.8" y="751" font-size="16.6" fill="#5a5a5a" text-anchor="middle" textLength="17.4" lengthAdjust="spacingAndGlyphs">22</text>
<text x="16.8" y="775" font-size="16.6" fill="#5a5a5a" text-anchor="middle" textLength="17.4" lengthAdjust="spacingAndGlyphs">23</text>
<text x="16.8" y="799" font-size="16.6" fill="#5a5a5a" text-anchor="middle" textLength="17.4" lengthAdjust="spacingAndGlyphs">24</text>
<text x="16.8" y="823" font-size="16.6" fill="#5a5a5a" text-anchor="middle" textLength="17.4" lengthAdjust="spacingAndGlyphs">25</text>
<text x="39.0" y="209" font-size="25.5" fill="#3f7fbf" textLength="73.1" lengthAdjust="spacingAndGlyphs" stroke="#3f7fbf" stroke-width="0.5">Month</text>
<rect x="39.1" y="210.8" width="72.7" height="1.3" fill="#3f7fbf"/>
<text x="146.79999999999998" y="209" font-size="25.5" fill="#3f7fbf" textLength="205.0" lengthAdjust="spacingAndGlyphs" stroke="#3f7fbf" stroke-width="0.5">Email Subscribers</text>
<rect x="146.89999999999998" y="210.8" width="204.6" height="1.3" fill="#3f7fbf"/>
<text x="365.0" y="209" font-size="25.5" fill="#3f7fbf" textLength="119.8" lengthAdjust="spacingAndGlyphs" stroke="#3f7fbf" stroke-width="0.5">Open Rate</text>
<rect x="365.09999999999997" y="210.8" width="119.4" height="1.3" fill="#3f7fbf"/>
<text x="498.90000000000003" y="209" font-size="25.5" fill="#3f7fbf" textLength="213.8" lengthAdjust="spacingAndGlyphs" stroke="#3f7fbf" stroke-width="0.5">Click-Through Rate</text>
<rect x="499.0" y="210.8" width="213.4" height="1.3" fill="#3f7fbf"/>
<text x="37.8" y="237.6" font-size="19.6" fill="#000" textLength="29.400000000000002" lengthAdjust="spacingAndGlyphs" stroke="#000" stroke-width="0.15">Jan</text>
<text x="357.5" y="237.2" font-size="19.8" fill="#000" text-anchor="end" textLength="36" lengthAdjust="spacingAndGlyphs" stroke="#000" stroke-width="0.15">742</text>
<text x="491.6" y="237.2" font-size="19.8" fill="#000" text-anchor="end" stroke="#000" stroke-width="0.15"><tspan textLength="24.6" lengthAdjust="spacingAndGlyphs">64</tspan><tspan textLength="14.6" lengthAdjust="spacingAndGlyphs">%</tspan></text>
<text x="718.6" y="237.2" font-size="19.8" fill="#000" text-anchor="end" stroke="#000" stroke-width="0.15"><tspan textLength="24.6" lengthAdjust="spacingAndGlyphs">38</tspan><tspan textLength="14.6" lengthAdjust="spacingAndGlyphs">%</tspan></text>
<text x="37.8" y="264.6" font-size="19.6" fill="#000" textLength="32.6" lengthAdjust="spacingAndGlyphs" stroke="#000" stroke-width="0.15">Feb</text>
<text x="357.5" y="264.20000000000005" font-size="19.8" fill="#000" text-anchor="end" textLength="36" lengthAdjust="spacingAndGlyphs" stroke="#000" stroke-width="0.15">814</text>
<text x="491.6" y="264.2" font-size="19.8" fill="#000" text-anchor="end" stroke="#000" stroke-width="0.15"><tspan textLength="24.6" lengthAdjust="spacingAndGlyphs">62</tspan><tspan textLength="14.6" lengthAdjust="spacingAndGlyphs">%</tspan></text>
<text x="718.6" y="264.2" font-size="19.8" fill="#000" text-anchor="end" stroke="#000" stroke-width="0.15"><tspan textLength="24.6" lengthAdjust="spacingAndGlyphs">39</tspan><tspan textLength="14.6" lengthAdjust="spacingAndGlyphs">%</tspan></text>
<text x="37.8" y="291.6" font-size="19.6" fill="#000" textLength="34.4" lengthAdjust="spacingAndGlyphs" stroke="#000" stroke-width="0.15">Mar</text>
<text x="357.5" y="291.20000000000005" font-size="19.8" fill="#000" text-anchor="end" textLength="36" lengthAdjust="spacingAndGlyphs" stroke="#000" stroke-width="0.15">926</text>
<text x="491.6" y="291.2" font-size="19.8" fill="#000" text-anchor="end" stroke="#000" stroke-width="0.15"><tspan textLength="24.6" lengthAdjust="spacingAndGlyphs">60</tspan><tspan textLength="14.6" lengthAdjust="spacingAndGlyphs">%</tspan></text>
<text x="718.6" y="291.2" font-size="19.8" fill="#000" text-anchor="end" stroke="#000" stroke-width="0.15"><tspan textLength="24.6" lengthAdjust="spacingAndGlyphs">38</tspan><tspan textLength="14.6" lengthAdjust="spacingAndGlyphs">%</tspan></text>
<text x="37.8" y="318.6" font-size="19.6" fill="#000" textLength="29.6" lengthAdjust="spacingAndGlyphs" stroke="#000" stroke-width="0.15">Apr</text>
<text x="357.5" y="318.20000000000005" font-size="19.8" fill="#000" text-anchor="end" textLength="36" lengthAdjust="spacingAndGlyphs" stroke="#000" stroke-width="0.15">947</text>
<text x="491.6" y="318.2" font-size="19.8" fill="#000" text-anchor="end" stroke="#000" stroke-width="0.15"><tspan textLength="24.6" lengthAdjust="spacingAndGlyphs">59</tspan><tspan textLength="14.6" lengthAdjust="spacingAndGlyphs">%</tspan></text>
<text x="718.6" y="318.2" font-size="19.8" fill="#000" text-anchor="end" stroke="#000" stroke-width="0.15"><tspan textLength="24.6" lengthAdjust="spacingAndGlyphs">37</tspan><tspan textLength="14.6" lengthAdjust="spacingAndGlyphs">%</tspan></text>
<text x="37.8" y="345.6" font-size="19.6" fill="#000" textLength="36.4" lengthAdjust="spacingAndGlyphs" stroke="#000" stroke-width="0.15">May</text>
<text x="357.5" y="345.20000000000005" font-size="19.8" fill="#000" text-anchor="end" textLength="53.6" lengthAdjust="spacingAndGlyphs" stroke="#000" stroke-width="0.15">1,024</text>
<text x="491.6" y="345.2" font-size="19.8" fill="#000" text-anchor="end" stroke="#000" stroke-width="0.15"><tspan textLength="24.6" lengthAdjust="spacingAndGlyphs">61</tspan><tspan textLength="14.6" lengthAdjust="spacingAndGlyphs">%</tspan></text>
<text x="718.6" y="345.2" font-size="19.8" fill="#000" text-anchor="end" stroke="#000" stroke-width="0.15"><tspan textLength="24.6" lengthAdjust="spacingAndGlyphs">36</tspan><tspan textLength="14.6" lengthAdjust="spacingAndGlyphs">%</tspan></text>
<text x="37.8" y="372.6" font-size="19.6" fill="#000" textLength="30.2" lengthAdjust="spacingAndGlyphs" stroke="#000" stroke-width="0.15">Jun</text>
<text x="357.5" y="372.20000000000005" font-size="19.8" fill="#000" text-anchor="end" textLength="53.6" lengthAdjust="spacingAndGlyphs" stroke="#000" stroke-width="0.15">1,102</text>
<text x="491.6" y="372.2" font-size="19.8" fill="#000" text-anchor="end" stroke="#000" stroke-width="0.15"><tspan textLength="24.6" lengthAdjust="spacingAndGlyphs">58</tspan><tspan textLength="14.6" lengthAdjust="spacingAndGlyphs">%</tspan></text>
<text x="718.6" y="372.2" font-size="19.8" fill="#000" text-anchor="end" stroke="#000" stroke-width="0.15"><tspan textLength="24.6" lengthAdjust="spacingAndGlyphs">37</tspan><tspan textLength="14.6" lengthAdjust="spacingAndGlyphs">%</tspan></text>
<text x="37.8" y="399.6" font-size="19.6" fill="#000" textLength="23.400000000000002" lengthAdjust="spacingAndGlyphs" stroke="#000" stroke-width="0.15">Jul</text>
<text x="357.5" y="399.20000000000005" font-size="19.8" fill="#000" text-anchor="end" textLength="53.6" lengthAdjust="spacingAndGlyphs" stroke="#000" stroke-width="0.15">1,291</text>
<text x="491.6" y="399.2" font-size="19.8" fill="#000" text-anchor="end" stroke="#000" stroke-width="0.15"><tspan textLength="24.6" lengthAdjust="spacingAndGlyphs">72</tspan><tspan textLength="14.6" lengthAdjust="spacingAndGlyphs">%</tspan></text>
<text x="718.6" y="399.2" font-size="19.8" fill="#000" text-anchor="end" stroke="#000" stroke-width="0.15"><tspan textLength="24.6" lengthAdjust="spacingAndGlyphs">41</tspan><tspan textLength="14.6" lengthAdjust="spacingAndGlyphs">%</tspan></text>
<text x="37.8" y="426.6" font-size="19.6" fill="#000" textLength="33.8" lengthAdjust="spacingAndGlyphs" stroke="#000" stroke-width="0.15">Aug</text>
<text x="357.5" y="426.20000000000005" font-size="19.8" fill="#000" text-anchor="end" textLength="53.6" lengthAdjust="spacingAndGlyphs" stroke="#000" stroke-width="0.15">1,353</text>
<text x="491.6" y="426.2" font-size="19.8" fill="#000" text-anchor="end" stroke="#000" stroke-width="0.15"><tspan textLength="24.6" lengthAdjust="spacingAndGlyphs">57</tspan><tspan textLength="14.6" lengthAdjust="spacingAndGlyphs">%</tspan></text>
<text x="718.6" y="426.2" font-size="19.8" fill="#000" text-anchor="end" stroke="#000" stroke-width="0.15"><tspan textLength="24.6" lengthAdjust="spacingAndGlyphs">34</tspan><tspan textLength="14.6" lengthAdjust="spacingAndGlyphs">%</tspan></text>
<text x="37.8" y="453.6" font-size="19.6" fill="#000" textLength="40.599999999999994" lengthAdjust="spacingAndGlyphs" stroke="#000" stroke-width="0.15">Sept</text>
<text x="357.5" y="453.20000000000005" font-size="19.8" fill="#000" text-anchor="end" textLength="53.6" lengthAdjust="spacingAndGlyphs" stroke="#000" stroke-width="0.15">1,585</text>
<text x="491.6" y="453.2" font-size="19.8" fill="#000" text-anchor="end" stroke="#000" stroke-width="0.15"><tspan textLength="24.6" lengthAdjust="spacingAndGlyphs">58</tspan><tspan textLength="14.6" lengthAdjust="spacingAndGlyphs">%</tspan></text>
<text x="718.6" y="453.2" font-size="19.8" fill="#000" text-anchor="end" stroke="#000" stroke-width="0.15"><tspan textLength="24.6" lengthAdjust="spacingAndGlyphs">33</tspan><tspan textLength="14.6" lengthAdjust="spacingAndGlyphs">%</tspan></text>
<text x="37.8" y="480.6" font-size="19.6" fill="#000" textLength="29.5" lengthAdjust="spacingAndGlyphs" stroke="#000" stroke-width="0.15">Oct</text>
<text x="357.5" y="480.20000000000005" font-size="19.8" fill="#000" text-anchor="end" textLength="53.6" lengthAdjust="spacingAndGlyphs" stroke="#000" stroke-width="0.15">1,741</text>
<text x="491.6" y="480.2" font-size="19.8" fill="#000" text-anchor="end" stroke="#000" stroke-width="0.15"><tspan textLength="24.6" lengthAdjust="spacingAndGlyphs">56</tspan><tspan textLength="14.6" lengthAdjust="spacingAndGlyphs">%</tspan></text>
<text x="718.6" y="480.2" font-size="19.8" fill="#000" text-anchor="end" stroke="#000" stroke-width="0.15"><tspan textLength="24.6" lengthAdjust="spacingAndGlyphs">33</tspan><tspan textLength="14.6" lengthAdjust="spacingAndGlyphs">%</tspan></text>
<text x="37.8" y="507.6" font-size="19.6" fill="#000" textLength="34.099999999999994" lengthAdjust="spacingAndGlyphs" stroke="#000" stroke-width="0.15">Nov</text>
<text x="357.5" y="507.20000000000005" font-size="19.8" fill="#000" text-anchor="end" textLength="53.6" lengthAdjust="spacingAndGlyphs" stroke="#000" stroke-width="0.15">1,886</text>
<text x="491.6" y="507.2" font-size="19.8" fill="#000" text-anchor="end" stroke="#000" stroke-width="0.15"><tspan textLength="24.6" lengthAdjust="spacingAndGlyphs">55</tspan><tspan textLength="14.6" lengthAdjust="spacingAndGlyphs">%</tspan></text>
<text x="718.6" y="507.2" font-size="19.8" fill="#000" text-anchor="end" stroke="#000" stroke-width="0.15"><tspan textLength="24.6" lengthAdjust="spacingAndGlyphs">32</tspan><tspan textLength="14.6" lengthAdjust="spacingAndGlyphs">%</tspan></text>
<text x="37.8" y="534.6" font-size="19.6" fill="#000" textLength="34.8" lengthAdjust="spacingAndGlyphs" stroke="#000" stroke-width="0.15">Dec</text>
<text x="357.5" y="534.2" font-size="19.8" fill="#000" text-anchor="end" textLength="53.6" lengthAdjust="spacingAndGlyphs" stroke="#000" stroke-width="0.15">1,981</text>
<text x="491.6" y="534.2" font-size="19.8" fill="#000" text-anchor="end" stroke="#000" stroke-width="0.15"><tspan textLength="24.6" lengthAdjust="spacingAndGlyphs">55</tspan><tspan textLength="14.6" lengthAdjust="spacingAndGlyphs">%</tspan></text>
<text x="718.6" y="534.2" font-size="19.8" fill="#000" text-anchor="end" stroke="#000" stroke-width="0.15"><tspan textLength="24.6" lengthAdjust="spacingAndGlyphs">31</tspan><tspan textLength="14.6" lengthAdjust="spacingAndGlyphs">%</tspan></text>
</g>
<g id="chart">
<rect x="722" y="182" width="589" height="367" fill="#ffffff"/>
<path d="M721.5 182V549.5H1311.5V182" fill="none" stroke="#cacaca" stroke-width="1"/>
<path d="M725.5 182V545.5H1307.5V182" fill="none" stroke="#dcdcdc" stroke-width="1"/>
<rect x="719.5" y="543.5" width="8" height="8" fill="#ffffff" stroke="#c4c4c4" stroke-width="1" rx="1"/>
<rect x="1012" y="543.5" width="8" height="8" fill="#ffffff" stroke="#c4c4c4" stroke-width="1" rx="1"/>
<rect x="1305.5" y="543.5" width="8" height="8" fill="#ffffff" stroke="#c4c4c4" stroke-width="1" rx="1"/>
<rect x="719.5" y="358.5" width="8" height="8" fill="#ffffff" stroke="#c4c4c4" stroke-width="1" rx="1"/>
<rect x="1305.5" y="358.5" width="8" height="8" fill="#ffffff" stroke="#c4c4c4" stroke-width="1" rx="1"/>
<path d="M719.5 182h8v.8q0 1-1 1h-6q-1 0-1-1z" fill="#fff" stroke="#c8c8c8" stroke-width="1"/>
<path d="M1011.5 182h8v.8q0 1-1 1h-6q-1 0-1-1z" fill="#fff" stroke="#c8c8c8" stroke-width="1"/>
<path d="M1305.5 182h8v.8q0 1-1 1h-6q-1 0-1-1z" fill="#fff" stroke="#c8c8c8" stroke-width="1"/>
<text x="952.6" y="216.2" font-size="20" fill="#595959" textLength="126.6" lengthAdjust="spacingAndGlyphs">2017 Email List</text>
<line x1="809.5" y1="435.5" x2="1226.5" y2="435.5" stroke="#d9d9d9" stroke-width="1" />
<text x="796.4" y="440.2" font-size="13.2" fill="#595959" text-anchor="end" textLength="6.65" lengthAdjust="spacingAndGlyphs">0</text>
<line x1="809.5" y1="396.5" x2="1226.5" y2="396.5" stroke="#d9d9d9" stroke-width="1" />
<text x="796.4" y="401.7" font-size="13.2" fill="#595959" text-anchor="end" textLength="19.950000000000003" lengthAdjust="spacingAndGlyphs">500</text>
<line x1="809.5" y1="358.5" x2="1226.5" y2="358.5" stroke="#d9d9d9" stroke-width="1" />
<text x="796.4" y="363.2" font-size="13.2" fill="#595959" text-anchor="end" textLength="26.6" lengthAdjust="spacingAndGlyphs">1000</text>
<line x1="809.5" y1="319.5" x2="1226.5" y2="319.5" stroke="#d9d9d9" stroke-width="1" />
<text x="796.4" y="324.6" font-size="13.2" fill="#595959" text-anchor="end" textLength="26.6" lengthAdjust="spacingAndGlyphs">1500</text>
<line x1="809.5" y1="281.5" x2="1226.5" y2="281.5" stroke="#d9d9d9" stroke-width="1" />
<text x="796.4" y="286.1" font-size="13.2" fill="#595959" text-anchor="end" textLength="26.6" lengthAdjust="spacingAndGlyphs">2000</text>
<line x1="809.5" y1="242.5" x2="1226.5" y2="242.5" stroke="#d9d9d9" stroke-width="1" />
<text x="796.4" y="247.6" font-size="13.2" fill="#595959" text-anchor="end" textLength="26.6" lengthAdjust="spacingAndGlyphs">2500</text>
<text x="1239.4" y="440.2" font-size="13.2" fill="#595959" textLength="17" lengthAdjust="spacingAndGlyphs">0%</text>
<text x="1239.4" y="416.1" font-size="13.2" fill="#595959" textLength="23.6" lengthAdjust="spacingAndGlyphs">10%</text>
<text x="1239.4" y="392.1" font-size="13.2" fill="#595959" textLength="23.6" lengthAdjust="spacingAndGlyphs">20%</text>
<text x="1239.4" y="368.0" font-size="13.2" fill="#595959" textLength="23.6" lengthAdjust="spacingAndGlyphs">30%</text>
<text x="1239.4" y="343.9" font-size="13.2" fill="#595959" textLength="23.6" lengthAdjust="spacingAndGlyphs">40%</text>
<text x="1239.4" y="319.8" font-size="13.2" fill="#595959" textLength="23.6" lengthAdjust="spacingAndGlyphs">50%</text>
<text x="1239.4" y="295.8" font-size="13.2" fill="#595959" textLength="23.6" lengthAdjust="spacingAndGlyphs">60%</text>
<text x="1239.4" y="271.7" font-size="13.2" fill="#595959" textLength="23.6" lengthAdjust="spacingAndGlyphs">70%</text>
<text x="1239.4" y="247.6" font-size="13.2" fill="#595959" textLength="23.6" lengthAdjust="spacingAndGlyphs">80%</text>
<rect x="821.5" y="377.8" width="10.8" height="57.2" fill="#60a0dc"/>
<text x="826.9" y="456.8" font-size="13.2" fill="#595959" text-anchor="middle" textLength="18.2" lengthAdjust="spacingAndGlyphs">Jan</text>
<rect x="856.2" y="372.3" width="10.8" height="62.7" fill="#60a0dc"/>
<text x="861.6" y="456.8" font-size="13.2" fill="#595959" text-anchor="middle" textLength="19.6" lengthAdjust="spacingAndGlyphs">Feb</text>
<rect x="891.0" y="363.7" width="10.8" height="71.3" fill="#60a0dc"/>
<text x="896.4" y="456.8" font-size="13.2" fill="#595959" text-anchor="middle" textLength="22.4" lengthAdjust="spacingAndGlyphs">Mar</text>
<rect x="925.7" y="362.0" width="10.8" height="73.0" fill="#60a0dc"/>
<text x="931.1" y="456.8" font-size="13.2" fill="#595959" text-anchor="middle" textLength="19.4" lengthAdjust="spacingAndGlyphs">Apr</text>
<rect x="960.5" y="356.1" width="10.8" height="78.9" fill="#60a0dc"/>
<text x="965.9" y="456.8" font-size="13.2" fill="#595959" text-anchor="middle" textLength="24" lengthAdjust="spacingAndGlyphs">May</text>
<rect x="995.2" y="350.1" width="10.8" height="84.9" fill="#60a0dc"/>
<text x="1000.6" y="456.8" font-size="13.2" fill="#595959" text-anchor="middle" textLength="18.6" lengthAdjust="spacingAndGlyphs">Jun</text>
<rect x="1030.0" y="335.5" width="10.8" height="99.5" fill="#60a0dc"/>
<text x="1035.4" y="456.8" font-size="13.2" fill="#595959" text-anchor="middle" textLength="14.6" lengthAdjust="spacingAndGlyphs">Jul</text>
<rect x="1064.7" y="330.8" width="10.8" height="104.2" fill="#60a0dc"/>
<text x="1070.1" y="456.8" font-size="13.2" fill="#595959" text-anchor="middle" textLength="21.2" lengthAdjust="spacingAndGlyphs">Aug</text>
<rect x="1099.5" y="312.9" width="10.8" height="122.1" fill="#60a0dc"/>
<text x="1104.9" y="456.8" font-size="13.2" fill="#595959" text-anchor="middle" textLength="25.6" lengthAdjust="spacingAndGlyphs">Sept</text>
<rect x="1134.2" y="300.9" width="10.8" height="134.1" fill="#60a0dc"/>
<text x="1139.6" y="456.8" font-size="13.2" fill="#595959" text-anchor="middle" textLength="19" lengthAdjust="spacingAndGlyphs">Oct</text>
<rect x="1169.0" y="289.7" width="10.8" height="145.3" fill="#60a0dc"/>
<text x="1174.4" y="456.8" font-size="13.2" fill="#595959" text-anchor="middle" textLength="21.8" lengthAdjust="spacingAndGlyphs">Nov</text>
<rect x="1203.7" y="282.4" width="10.8" height="152.6" fill="#60a0dc"/>
<text x="1209.1" y="456.8" font-size="13.2" fill="#595959" text-anchor="middle" textLength="20.6" lengthAdjust="spacingAndGlyphs">Dec</text>
<polyline points="826.9,343.5 861.6,341.1 896.4,343.5 931.1,345.9 965.9,348.3 1000.6,345.9 1035.4,336.3 1070.1,353.1 1104.9,355.6 1139.6,355.6 1174.4,358.0 1209.1,360.4" fill="none" stroke="#a5a5a5" stroke-width="3" stroke-linejoin="round" stroke-linecap="round"/>
<polyline points="826.9,280.9 861.6,285.7 896.4,290.6 931.1,293.0 965.9,288.1 1000.6,295.4 1035.4,261.7 1070.1,297.8 1104.9,295.4 1139.6,300.2 1174.4,302.6 1209.1,302.6" fill="none" stroke="#ed7d31" stroke-width="3" stroke-linejoin="round" stroke-linecap="round"/>
<text x="841.1" y="285.9" font-size="13.2" fill="#404040" textLength="23.3" lengthAdjust="spacingAndGlyphs">64%</text>
<text x="875.8" y="290.7" font-size="13.2" fill="#404040" textLength="23.3" lengthAdjust="spacingAndGlyphs">62%</text>
<text x="910.6" y="295.6" font-size="13.2" fill="#404040" textLength="23.3" lengthAdjust="spacingAndGlyphs">60%</text>
<text x="945.3" y="298.0" font-size="13.2" fill="#404040" textLength="23.3" lengthAdjust="spacingAndGlyphs">59%</text>
<text x="980.1" y="293.1" font-size="13.2" fill="#404040" textLength="23.3" lengthAdjust="spacingAndGlyphs">61%</text>
<text x="1014.8" y="300.4" font-size="13.2" fill="#404040" textLength="23.3" lengthAdjust="spacingAndGlyphs">58%</text>
<text x="1049.6" y="266.7" font-size="13.2" fill="#404040" textLength="23.3" lengthAdjust="spacingAndGlyphs">72%</text>
<text x="1084.3" y="302.8" font-size="13.2" fill="#404040" textLength="23.3" lengthAdjust="spacingAndGlyphs">57%</text>
<text x="1119.1" y="300.4" font-size="13.2" fill="#404040" textLength="23.3" lengthAdjust="spacingAndGlyphs">58%</text>
<text x="1153.8" y="305.2" font-size="13.2" fill="#404040" textLength="23.3" lengthAdjust="spacingAndGlyphs">56%</text>
<text x="1188.6" y="307.6" font-size="13.2" fill="#404040" textLength="23.3" lengthAdjust="spacingAndGlyphs">55%</text>
<text x="1223.3" y="307.6" font-size="13.2" fill="#404040" textLength="23.3" lengthAdjust="spacingAndGlyphs">55%</text>
<text x="997" y="479.8" font-size="14.4" fill="#595959" font-weight="bold" textLength="42" lengthAdjust="spacingAndGlyphs">Month</text>
<text x="760" y="339.5" font-size="13.8" fill="#595959" text-anchor="middle" font-weight="bold" textLength="71.5" lengthAdjust="spacingAndGlyphs" transform="rotate(-90 760 339.5)">Subscribers</text>
<text x="1281.4" y="338.5" font-size="13.4" fill="#595959" text-anchor="middle" font-weight="bold" textLength="65.5" lengthAdjust="spacingAndGlyphs" transform="rotate(-90 1281.4 338.5)">Open Rate</text>
<rect x="855" y="516" width="28.6" height="8.4" fill="#60a0dc"/>
<text x="887" y="525" font-size="13.2" fill="#595959" textLength="96" lengthAdjust="spacingAndGlyphs">Email Subscribers</text>
<line x1="1002.5" y1="519.8" x2="1030.5" y2="519.8" stroke="#ed7d31" stroke-width="3" stroke-linecap="round"/>
<text x="1034.5" y="525" font-size="13.2" fill="#595959" textLength="57" lengthAdjust="spacingAndGlyphs">Open Rate</text>
<line x1="1111.5" y1="519.8" x2="1139.5" y2="519.8" stroke="#a5a5a5" stroke-width="3" stroke-linecap="round"/>
<text x="1143" y="525" font-size="13.2" fill="#595959" textLength="39.5" lengthAdjust="spacingAndGlyphs">Series3</text>
</g>
</svg>
</body>
</html>
